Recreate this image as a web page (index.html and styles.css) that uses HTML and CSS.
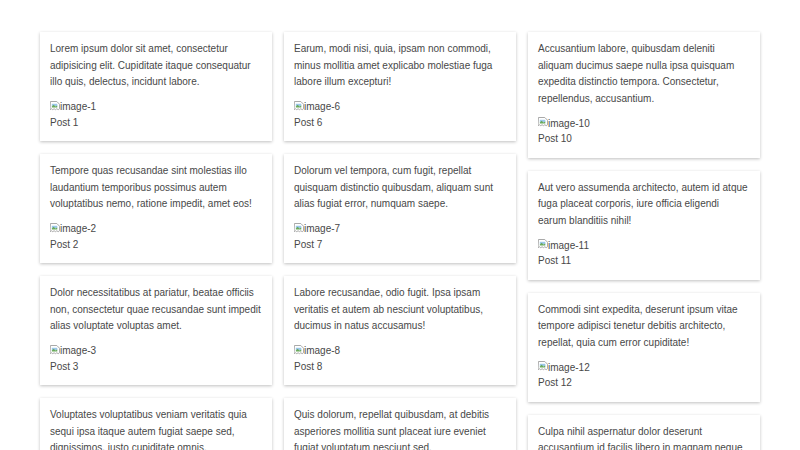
FILE: index.html
```html
<!DOCTYPE html>
<html>
<head>
<meta charset="utf-8">
<link rel="stylesheet" href="styles.css">
</head>
<body>
<div class="grid">
  <div class="col">
    <div class="card"><p>Lorem ipsum dolor sit amet, consectetur adipisicing elit. Cupiditate itaque consequatur illo quis, delectus, incidunt labore.</p><div class="img"><svg class="bi" viewBox="0 0 11 12"><path d="M.5 .5h7l3 3v5l-1.5 1-1.5-1-1.5 1-1.5-1-1.5 1-1.5-1-1.5 1z" fill="#fff" stroke="#a0a0a0"/><path d="M2 3h6v3H2z" fill="#9cc8ea"/><path d="M2 6l2-2 2 2 2-1v2H2z" fill="#6aaa5a"/></svg>image-1</div><div class="cap">Post 1</div></div>
    <div class="card"><p>Tempore quas recusandae sint molestias illo laudantium temporibus possimus autem voluptatibus nemo, ratione impedit, amet eos!</p><div class="img"><svg class="bi" viewBox="0 0 11 12"><path d="M.5 .5h7l3 3v5l-1.5 1-1.5-1-1.5 1-1.5-1-1.5 1-1.5-1-1.5 1z" fill="#fff" stroke="#a0a0a0"/><path d="M2 3h6v3H2z" fill="#9cc8ea"/><path d="M2 6l2-2 2 2 2-1v2H2z" fill="#6aaa5a"/></svg>image-2</div><div class="cap">Post 2</div></div>
    <div class="card"><p>Dolor necessitatibus at pariatur, beatae officiis non, consectetur quae recusandae sunt impedit alias voluptate voluptas amet.</p><div class="img"><svg class="bi" viewBox="0 0 11 12"><path d="M.5 .5h7l3 3v5l-1.5 1-1.5-1-1.5 1-1.5-1-1.5 1-1.5-1-1.5 1z" fill="#fff" stroke="#a0a0a0"/><path d="M2 3h6v3H2z" fill="#9cc8ea"/><path d="M2 6l2-2 2 2 2-1v2H2z" fill="#6aaa5a"/></svg>image-3</div><div class="cap">Post 3</div></div>
    <div class="card"><p>Voluptates voluptatibus veniam veritatis quia sequi ipsa itaque autem fugiat saepe sed, dignissimos, iusto cupiditate omnis.</p><div class="img"><svg class="bi" viewBox="0 0 11 12"><path d="M.5 .5h7l3 3v5l-1.5 1-1.5-1-1.5 1-1.5-1-1.5 1-1.5-1-1.5 1z" fill="#fff" stroke="#a0a0a0"/><path d="M2 3h6v3H2z" fill="#9cc8ea"/><path d="M2 6l2-2 2 2 2-1v2H2z" fill="#6aaa5a"/></svg>image-4</div><div class="cap">Post 4</div></div>
  </div>
  <div class="col">
    <div class="card"><p>Earum, modi nisi, quia, ipsam non commodi, minus mollitia amet explicabo molestiae fuga labore illum excepturi!</p><div class="img"><svg class="bi" viewBox="0 0 11 12"><path d="M.5 .5h7l3 3v5l-1.5 1-1.5-1-1.5 1-1.5-1-1.5 1-1.5-1-1.5 1z" fill="#fff" stroke="#a0a0a0"/><path d="M2 3h6v3H2z" fill="#9cc8ea"/><path d="M2 6l2-2 2 2 2-1v2H2z" fill="#6aaa5a"/></svg>image-6</div><div class="cap">Post 6</div></div>
    <div class="card"><p>Dolorum vel tempora, cum fugit, repellat quisquam distinctio quibusdam, aliquam sunt alias fugiat error, numquam saepe.</p><div class="img"><svg class="bi" viewBox="0 0 11 12"><path d="M.5 .5h7l3 3v5l-1.5 1-1.5-1-1.5 1-1.5-1-1.5 1-1.5-1-1.5 1z" fill="#fff" stroke="#a0a0a0"/><path d="M2 3h6v3H2z" fill="#9cc8ea"/><path d="M2 6l2-2 2 2 2-1v2H2z" fill="#6aaa5a"/></svg>image-7</div><div class="cap">Post 7</div></div>
    <div class="card"><p>Labore recusandae, odio fugit. Ipsa ipsam veritatis et autem ab nesciunt voluptatibus, ducimus in natus accusamus!</p><div class="img"><svg class="bi" viewBox="0 0 11 12"><path d="M.5 .5h7l3 3v5l-1.5 1-1.5-1-1.5 1-1.5-1-1.5 1-1.5-1-1.5 1z" fill="#fff" stroke="#a0a0a0"/><path d="M2 3h6v3H2z" fill="#9cc8ea"/><path d="M2 6l2-2 2 2 2-1v2H2z" fill="#6aaa5a"/></svg>image-8</div><div class="cap">Post 8</div></div>
    <div class="card"><p>Quis dolorum, repellat quibusdam, at debitis asperiores mollitia sunt placeat iure eveniet fugiat voluptatum nesciunt sed.</p><div class="img"><svg class="bi" viewBox="0 0 11 12"><path d="M.5 .5h7l3 3v5l-1.5 1-1.5-1-1.5 1-1.5-1-1.5 1-1.5-1-1.5 1z" fill="#fff" stroke="#a0a0a0"/><path d="M2 3h6v3H2z" fill="#9cc8ea"/><path d="M2 6l2-2 2 2 2-1v2H2z" fill="#6aaa5a"/></svg>image-9</div><div class="cap">Post 9</div></div>
  </div>
  <div class="col">
    <div class="card"><p>Accusantium labore, quibusdam deleniti aliquam ducimus saepe nulla ipsa quisquam expedita distinctio tempora. Consectetur, repellendus, accusantium.</p><div class="img"><svg class="bi" viewBox="0 0 11 12"><path d="M.5 .5h7l3 3v5l-1.5 1-1.5-1-1.5 1-1.5-1-1.5 1-1.5-1-1.5 1z" fill="#fff" stroke="#a0a0a0"/><path d="M2 3h6v3H2z" fill="#9cc8ea"/><path d="M2 6l2-2 2 2 2-1v2H2z" fill="#6aaa5a"/></svg>image-10</div><div class="cap">Post 10</div></div>
    <div class="card"><p>Aut vero assumenda architecto, autem id atque fuga placeat corporis, iure officia eligendi earum blanditiis nihil!</p><div class="img"><svg class="bi" viewBox="0 0 11 12"><path d="M.5 .5h7l3 3v5l-1.5 1-1.5-1-1.5 1-1.5-1-1.5 1-1.5-1-1.5 1z" fill="#fff" stroke="#a0a0a0"/><path d="M2 3h6v3H2z" fill="#9cc8ea"/><path d="M2 6l2-2 2 2 2-1v2H2z" fill="#6aaa5a"/></svg>image-11</div><div class="cap">Post 11</div></div>
    <div class="card"><p>Commodi sint expedita, deserunt ipsum vitae tempore adipisci tenetur debitis architecto, repellat, quia cum error cupiditate!</p><div class="img"><svg class="bi" viewBox="0 0 11 12"><path d="M.5 .5h7l3 3v5l-1.5 1-1.5-1-1.5 1-1.5-1-1.5 1-1.5-1-1.5 1z" fill="#fff" stroke="#a0a0a0"/><path d="M2 3h6v3H2z" fill="#9cc8ea"/><path d="M2 6l2-2 2 2 2-1v2H2z" fill="#6aaa5a"/></svg>image-12</div><div class="cap">Post 12</div></div>
    <div class="card"><p>Culpa nihil aspernatur dolor deserunt accusantium id facilis libero in magnam neque nobis, quae eaque ducimus.</p><div class="img"><svg class="bi" viewBox="0 0 11 12"><path d="M.5 .5h7l3 3v5l-1.5 1-1.5-1-1.5 1-1.5-1-1.5 1-1.5-1-1.5 1z" fill="#fff" stroke="#a0a0a0"/><path d="M2 3h6v3H2z" fill="#9cc8ea"/><path d="M2 6l2-2 2 2 2-1v2H2z" fill="#6aaa5a"/></svg>image-13</div><div class="cap">Post 13</div></div>
  </div>
</div>
</body>
</html>
```
FILE: styles.css
```css
html, body {
  margin: 0;
  background: #fff;
}
body {
  font-family: "Liberation Sans", Arial, sans-serif;
  font-size: 10px;
  line-height: 16.5px;
  color: #484848;
}
.grid {
  display: grid;
  grid-template-columns: repeat(3, 232px);
  column-gap: 12px;
  padding: 32px 40px;
  align-items: start;
}
.col {
  display: flex;
  flex-direction: column;
  gap: 13px;
}
.card {
  background: #fff;
  box-shadow: 0 1px 3px rgba(0, 0, 0, 0.25);
  padding: 9px 10px 10px;
}
.card p {
  margin: 0 0 10px;
}
.img {
  display: flex;
  align-items: center;
  height: 14px;
}
.bi {
  width: 10px;
  height: 11px;
  flex: none;
  margin-top: -3px;
}
.cap {
  line-height: 16.5px;
}
```
